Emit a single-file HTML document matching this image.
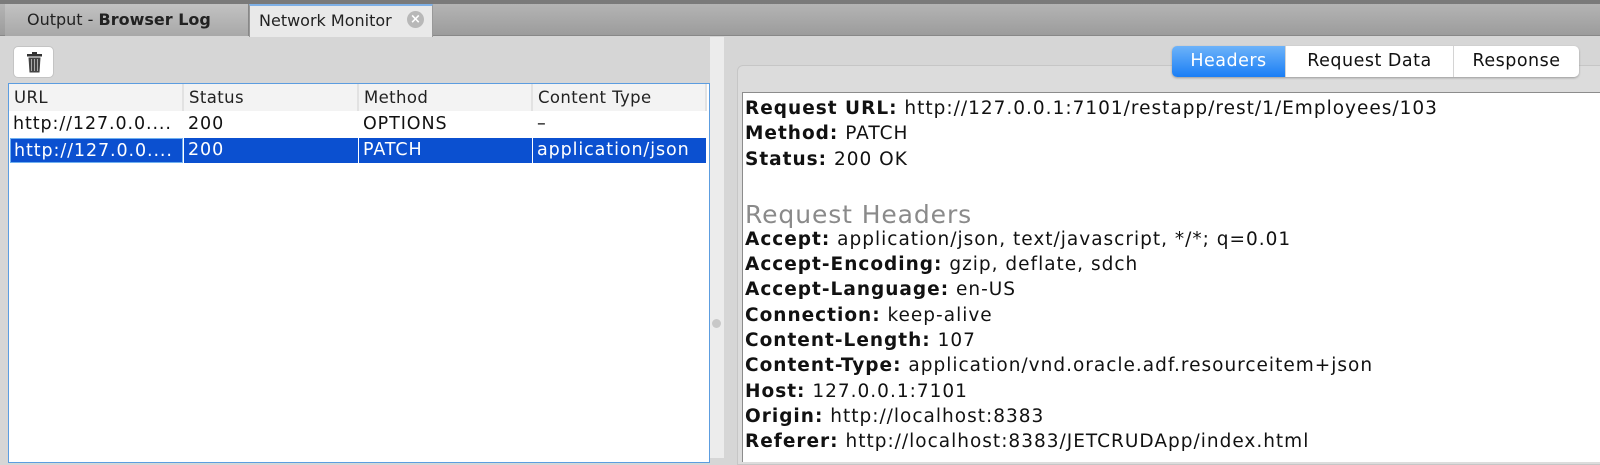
<!DOCTYPE html>
<html><head><meta charset="utf-8"><style>
*{margin:0;padding:0;box-sizing:border-box}
body{width:1600px;height:458px;overflow:hidden;background:#d6d6d6;font-family:"DejaVu Sans","Liberation Sans",sans-serif;position:relative;color:#111}
.abs{position:absolute}
#top{left:0;top:0;width:1600px;height:4px;background:#7a7a7a}
#bar{left:0;top:4px;width:1600px;height:32px;background:linear-gradient(#b4b4b4,#9c9c9c);border-bottom:1px solid #888}
#t1{left:5px;top:4px;width:244px;height:32px;background:linear-gradient(#c2c2c2,#a8a8a8);border-right:1px solid #888;font-size:16px;line-height:32px;padding-left:22px;color:#222}
#t2{left:249px;top:4px;width:184px;height:33px;background:#e9e9e9;border-top:2px solid #7fb0e6;border-left:1px solid #999;border-right:1px solid #999;font-size:16px;line-height:30px;padding-left:9px;color:#222}
#x{left:407px;top:11px;width:17px;height:17px;border-radius:50%;background:#b8b8b8;color:#fff;font-size:13px;line-height:17px;text-align:center;font-weight:bold}
#trash{left:13px;top:46px;width:41px;height:32px;background:#fff;border:1px solid #c4c4c4;border-radius:5px}
#tbl{left:8px;top:83px;width:702px;height:380px;background:#fff;border:1px solid #5c9de0}
.hd{position:absolute;top:0;height:27px;background:#f3f3f3;font-size:16.5px;letter-spacing:0.4px;line-height:27px;padding-left:5px;color:#222;border-right:2px solid #e2e2e2}
.cell{position:absolute;height:25px;font-size:17.5px;letter-spacing:0.9px;line-height:25px;padding-left:4px;white-space:nowrap;overflow:hidden}
.sel{background:#0b50d0;color:#fff}
#split{left:710px;top:37px;width:14px;height:421px;background:#ececec}
#dot{left:712px;top:319px;width:9px;height:9px;border-radius:50%;background:#c8c8c8}
#inner{left:737px;top:65px;width:870px;height:400px;background:#dcdcdc;border:1px solid #c6c6c6;border-radius:6px 0 0 0}
#content{left:742px;top:92px;width:860px;height:370px;background:#fff;border-top:1px solid #8c8c8c;border-left:1px solid #8c8c8c}
#tabs{left:1172px;top:46px;height:31px;display:flex;border-radius:5px;box-shadow:0 1px 2px #999;overflow:hidden;font-size:17.5px;letter-spacing:0.5px}
#tabs div{height:31px;line-height:31px;text-align:center;background:#fff;border-left:1px solid #d4d4d4;color:#111}
#tabs .on{background:linear-gradient(#6db3f9,#1a7ef5);color:#fff;border:none}
#txt{left:745px;top:96px;font-size:18.5px;letter-spacing:1px;line-height:25.3px;white-space:nowrap}
#txt b{font-weight:bold}
#rh{font-size:25px;letter-spacing:0.9px;color:#8a8a8a;line-height:34px;margin-top:26px;margin-bottom:-5px}
</style></head><body>
<div id="top" class="abs"></div>
<div id="bar" class="abs"></div>
<div id="t1" class="abs">Output - <b>Browser Log</b></div>
<div id="t2" class="abs">Network Monitor</div>
<div id="x" class="abs">×</div>
<div id="trash" class="abs"><svg width="41" height="32" viewBox="0 0 41 32"><rect x="13" y="7" width="15" height="2.5" fill="#333"/><rect x="18" y="5" width="5" height="2" fill="#333"/><path d="M14.5 10.5h12l-1 15h-10z" fill="#444"/><path d="M17.5 12v12M20.5 12v12M23.5 12v12" stroke="#aaa" stroke-width="1"/></svg></div>
<div id="tbl" class="abs">
<div class="hd" style="left:0;width:175px">URL</div>
<div class="hd" style="left:175px;width:175px">Status</div>
<div class="hd" style="left:350px;width:174px">Method</div>
<div class="hd" style="left:524px;width:174px">Content Type</div>
<div class="cell" style="left:0;top:28px;width:175px">http://127.0.0....</div>
<div class="cell" style="left:175px;top:28px;width:175px">200</div>
<div class="cell" style="left:350px;top:28px;width:174px">OPTIONS</div>
<div class="cell" style="left:524px;top:28px;width:174px">–</div>
<div class="cell sel" style="left:1px;top:54px;width:173px;border:1px solid #6fb0f0;padding-left:3px">http://127.0.0....</div>
<div class="cell sel" style="left:175px;top:54px;width:174px">200</div>
<div class="cell sel" style="left:350px;top:54px;width:173px">PATCH</div>
<div class="cell sel" style="left:524px;top:54px;width:173px">application/json</div>
</div>
<div id="split" class="abs"></div>
<div id="dot" class="abs"></div>
<div id="inner" class="abs"></div>
<div id="content" class="abs"></div>
<div id="tabs" class="abs"><div class="on" style="width:113px">Headers</div><div style="width:168px">Request Data</div><div style="width:126px">Response</div></div>
<div id="txt" class="abs">
<div><b>Request URL:</b> http://127.0.0.1:7101/restapp/rest/1/Employees/103</div>
<div><b>Method:</b> PATCH</div>
<div><b>Status:</b> 200 OK</div>
<div id="rh">Request Headers</div>
<div><b>Accept:</b> application/json, text/javascript, */*; q=0.01</div>
<div><b>Accept-Encoding:</b> gzip, deflate, sdch</div>
<div><b>Accept-Language:</b> en-US</div>
<div><b>Connection:</b> keep-alive</div>
<div><b>Content-Length:</b> 107</div>
<div><b>Content-Type:</b> application/vnd.oracle.adf.resourceitem+json</div>
<div><b>Host:</b> 127.0.0.1:7101</div>
<div><b>Origin:</b> http://localhost:8383</div>
<div><b>Referer:</b> http://localhost:8383/JETCRUDApp/index.html</div>
</div>
</body></html>
